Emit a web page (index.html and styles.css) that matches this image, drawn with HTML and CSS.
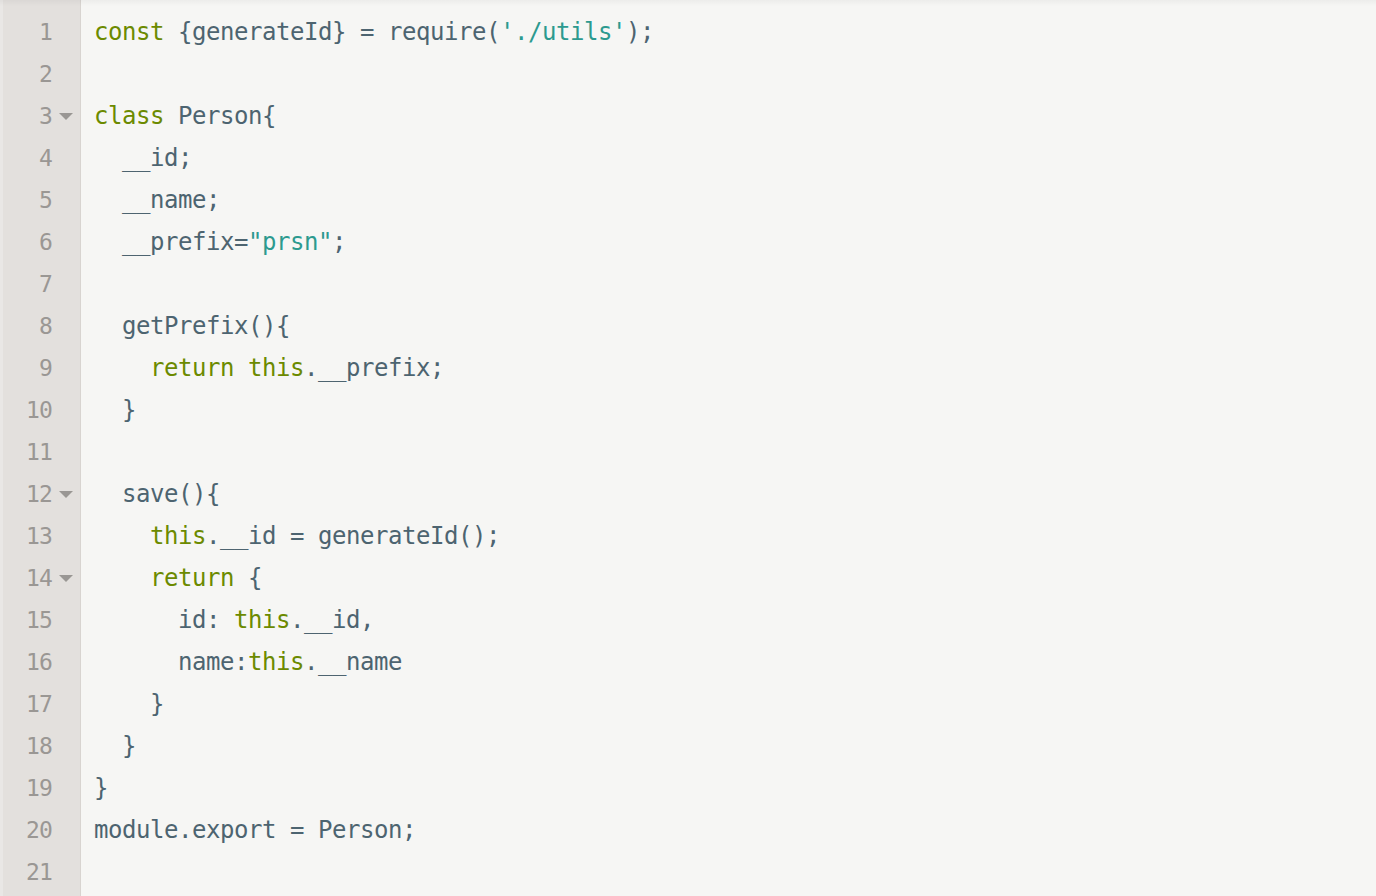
FILE: index.html
```html
<!DOCTYPE html>
<html>
<head>
<meta charset="utf-8">
<link rel="stylesheet" href="styles.css">
</head>
<body>
<div class="editor">
  <div class="gutter">
    <div class="ln"><span class="num">1</span><span class="fold"></span></div>
    <div class="ln"><span class="num">2</span><span class="fold"></span></div>
    <div class="ln"><span class="num">3</span><span class="fold open"></span></div>
    <div class="ln"><span class="num">4</span><span class="fold"></span></div>
    <div class="ln"><span class="num">5</span><span class="fold"></span></div>
    <div class="ln"><span class="num">6</span><span class="fold"></span></div>
    <div class="ln"><span class="num">7</span><span class="fold"></span></div>
    <div class="ln"><span class="num">8</span><span class="fold"></span></div>
    <div class="ln"><span class="num">9</span><span class="fold"></span></div>
    <div class="ln"><span class="num">10</span><span class="fold"></span></div>
    <div class="ln"><span class="num">11</span><span class="fold"></span></div>
    <div class="ln"><span class="num">12</span><span class="fold open"></span></div>
    <div class="ln"><span class="num">13</span><span class="fold"></span></div>
    <div class="ln"><span class="num">14</span><span class="fold open"></span></div>
    <div class="ln"><span class="num">15</span><span class="fold"></span></div>
    <div class="ln"><span class="num">16</span><span class="fold"></span></div>
    <div class="ln"><span class="num">17</span><span class="fold"></span></div>
    <div class="ln"><span class="num">18</span><span class="fold"></span></div>
    <div class="ln"><span class="num">19</span><span class="fold"></span></div>
    <div class="ln"><span class="num">20</span><span class="fold"></span></div>
    <div class="ln"><span class="num">21</span><span class="fold"></span></div>
  </div>
  <div class="code">
    <div class="line"><span class="kw">const</span> {generateId} = require(<span class="str">'./utils'</span>);</div>
    <div class="line"> </div>
    <div class="line"><span class="kw">class</span> Person{</div>
    <div class="line">  __id;</div>
    <div class="line">  __name;</div>
    <div class="line">  __prefix=<span class="str">"prsn"</span>;</div>
    <div class="line"> </div>
    <div class="line">  getPrefix(){</div>
    <div class="line">    <span class="kw">return</span> <span class="kw">this</span>.__prefix;</div>
    <div class="line">  }</div>
    <div class="line"> </div>
    <div class="line">  save(){</div>
    <div class="line">    <span class="kw">this</span>.__id = generateId();</div>
    <div class="line">    <span class="kw">return</span> {</div>
    <div class="line">      id: <span class="kw">this</span>.__id,</div>
    <div class="line">      name:<span class="kw">this</span>.__name</div>
    <div class="line">    }</div>
    <div class="line">  }</div>
    <div class="line">}</div>
    <div class="line">module.export = Person;</div>
    <div class="line"> </div>
  </div>
  <div class="shade"></div>
</div>
</body>
</html>
```

FILE: styles.css
```css
html, body {
  margin: 0;
  padding: 0;
  height: 100%;
  background: #f6f6f4;
}
.editor {
  position: relative;
  display: flex;
  height: 896px;
  overflow: hidden;
  background: #f6f6f4;
  font-family: "DejaVu Sans Mono", "Liberation Mono", monospace;
  font-size: 24px;
  letter-spacing: -0.45px;
}
.gutter {
  width: 80px;
  flex: none;
  padding-top: 11px;
  background: linear-gradient(to right, #e9e7e5 0, #e9e7e5 3px, #e3e0dd 3px);
  border-right: 1px solid #d8d4d0;
  box-sizing: content-box;
}
.ln {
  display: flex;
  align-items: center;
  height: 42px;
}
.num {
  width: 52px;
  text-align: right;
  color: #9a9794;
  font-size: 23px;
  letter-spacing: -0.8px;
}
.fold {
  width: 15px;
  height: 42px;
  margin-left: 6px;
  position: relative;
}
.fold.open::after {
  content: "";
  position: absolute;
  left: 1px;
  top: 18px;
  border-left: 7px solid transparent;
  border-right: 7px solid transparent;
  border-top: 7px solid #9a9794;
}
.code {
  flex: 1;
  padding-top: 11px;
  padding-left: 13px;
  color: #4d6470;
}
.line {
  height: 42px;
  line-height: 42px;
  white-space: pre;
}
.kw {
  color: #6c8a00;
}
.str {
  color: #2c9a8f;
}
.shade {
  position: absolute;
  left: 0;
  right: 0;
  top: 0;
  height: 6px;
  background: linear-gradient(to bottom, rgba(0,0,0,0.04), rgba(0,0,0,0));
  pointer-events: none;
}
```
